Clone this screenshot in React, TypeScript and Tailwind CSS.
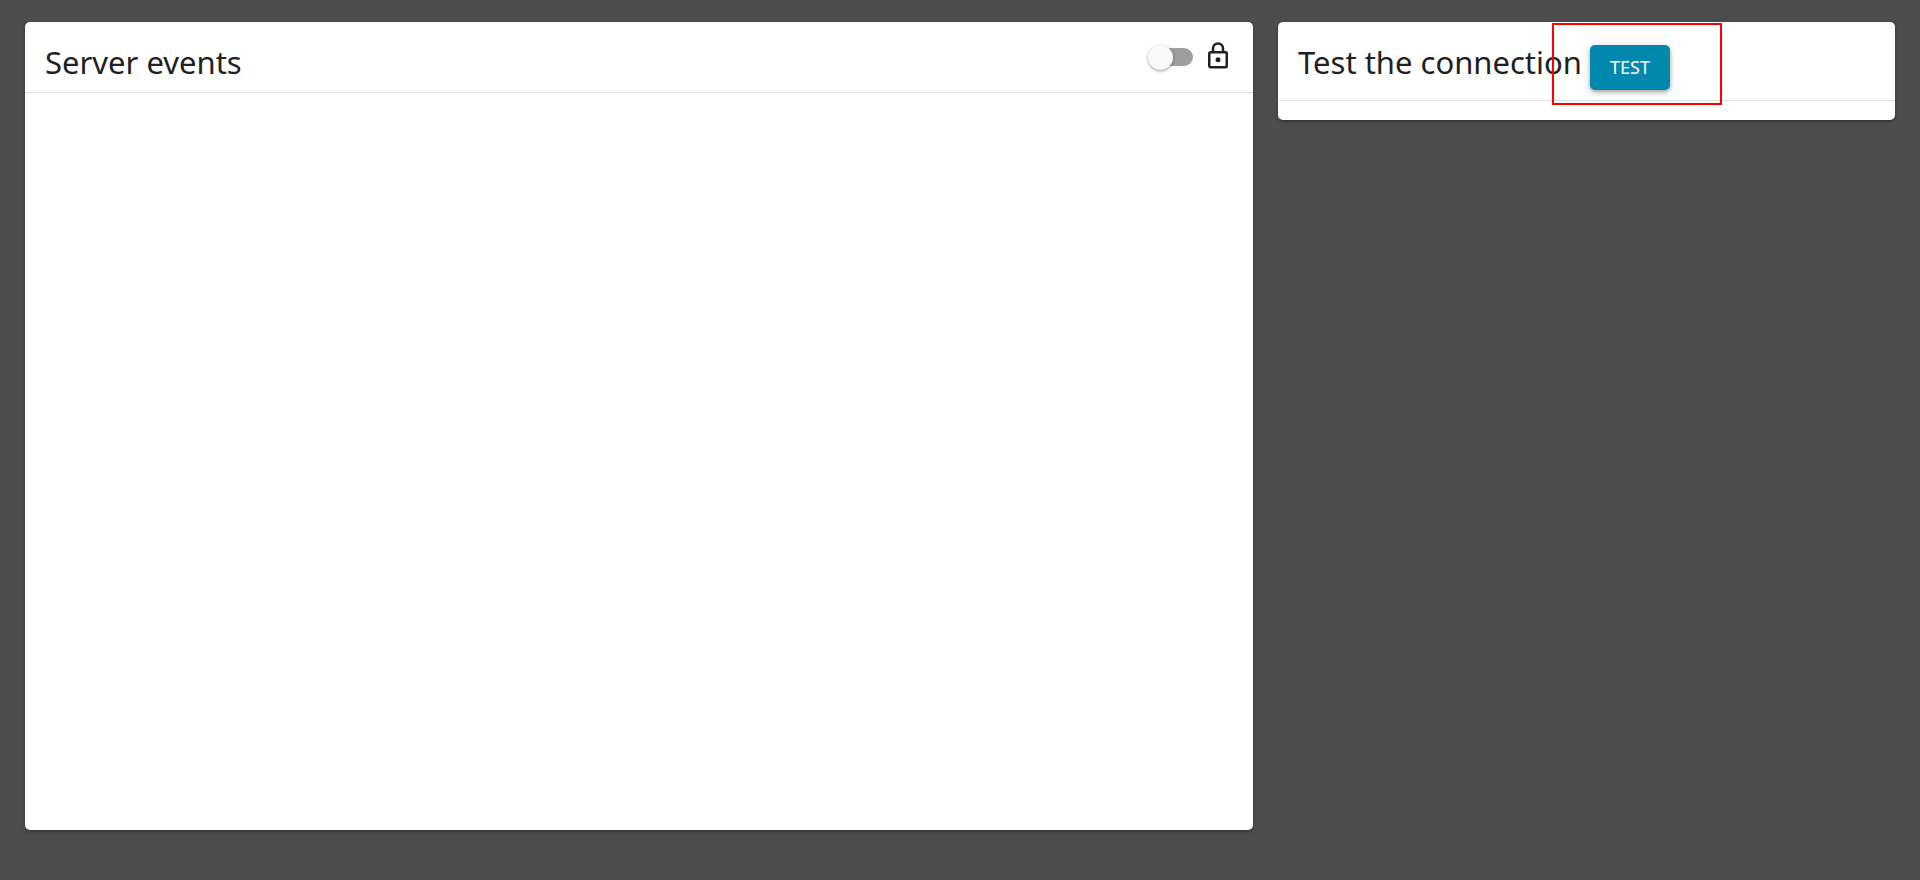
import { useState, type ReactNode } from "react";

function Card({ className = "", children }: { className?: string; children?: ReactNode }) {
  return (
    <section
      className={`rounded-[5px] bg-white shadow-[0_2px_2px_rgba(0,0,0,0.2),0_1px_4px_rgba(0,0,0,0.14)] ${className}`}
    >
      {children}
    </section>
  );
}

function LockIcon() {
  return (
    <svg viewBox="0 0 24 24" className="size-[30px] fill-[#212121]" aria-hidden="true">
      <path d="M12,17C10.89,17 10,16.1 10,15C10,13.89 10.89,13 12,13A2,2 0 0,1 14,15A2,2 0 0,1 12,17M18,20V10H6V20H18M18,8A2,2 0 0,1 20,10V20A2,2 0 0,1 18,22H6C4.89,22 4,21.1 4,20V10C4,8.89 4.89,8 6,8H7V6A5,5 0 0,1 12,1A5,5 0 0,1 17,6V8H18M12,3A3,3 0 0,0 9,6V8H15V6A3,3 0 0,0 12,3Z" />
    </svg>
  );
}

export default function App() {
  const [locked, setLocked] = useState(false);
  return (
    <main className="grid min-h-screen grid-cols-[1228fr_617fr] items-start gap-[25px] bg-[#4d4d4d] px-[25px] pt-[22px] pb-[50px] font-['Noto_Sans','Open_Sans',sans-serif] text-[#212121]">
      <Card className="self-stretch">
        <header className="flex h-[71px] items-start justify-between border-b border-[#dddddd] px-5">
          <h1 className="pt-5 text-[31px] leading-10">Server events</h1>
          <label className="flex cursor-pointer items-start gap-[10px] pt-[19px]">
            <input
              type="checkbox"
              role="switch"
              aria-label="Lock server events"
              checked={locked}
              onChange={(e) => setLocked(e.target.checked)}
              className="peer sr-only"
            />
            <span className="mt-[7px] flex h-[18px] w-[41px] items-center rounded-full bg-[#9e9e9e] peer-checked:justify-end peer-checked:bg-[#80c3d5]">
              <span className="-ml-1 size-[25px] rounded-full bg-[#fafafa] shadow-[0_1px_3px_rgba(0,0,0,0.4)]" />
            </span>
            <LockIcon />
          </label>
        </header>
      </Card>
      <Card>
        <header className="flex h-[79px] items-start gap-2 border-b border-[#dddddd] pl-5">
          <h2 className="pt-5 text-[31px] leading-10 whitespace-nowrap">Test the connection</h2>
          <div className="relative pt-[23px]">
            <button
              type="button"
              className="h-[45px] w-20 rounded-[5px] bg-[#0288ad] text-[18px] text-white shadow-[0_2px_5px_rgba(0,0,0,0.4)]"
            >
              TEST
            </button>
            <div className="pointer-events-none absolute top-px -left-[38px] h-[82px] w-[170px] border-2 border-[#ff0000]" />
          </div>
        </header>
        <div className="h-[19px]" />
      </Card>
    </main>
  );
}
